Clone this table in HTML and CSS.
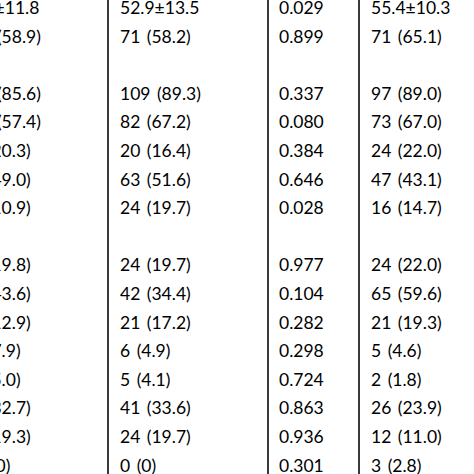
FILE: index.html
```html
<!DOCTYPE html>
<html>
<head>
<meta charset="utf-8">
<link rel="stylesheet" href="styles.css">
</head>
<body>
<div class="table">
  <div class="row"><div class="c a">54.1±11.8</div><div class="c b">52.9±13.5</div><div class="c p">0.029</div><div class="c d">55.4±10.3</div></div>
  <div class="row"><div class="c a">119 (58.9)</div><div class="c b">71 (58.2)</div><div class="c p">0.899</div><div class="c d">71 (65.1)</div></div>
  <div class="row"><div class="c a"></div><div class="c b"></div><div class="c p"></div><div class="c d"></div></div>
  <div class="row"><div class="c a">173 (85.6)</div><div class="c b">109 (89.3)</div><div class="c p">0.337</div><div class="c d">97 (89.0)</div></div>
  <div class="row"><div class="c a">116 (57.4)</div><div class="c b">82 (67.2)</div><div class="c p">0.080</div><div class="c d">73 (67.0)</div></div>
  <div class="row"><div class="c a">41 (20.3)</div><div class="c b">20 (16.4)</div><div class="c p">0.384</div><div class="c d">24 (22.0)</div></div>
  <div class="row"><div class="c a">99 (49.0)</div><div class="c b">63 (51.6)</div><div class="c p">0.646</div><div class="c d">47 (43.1)</div></div>
  <div class="row"><div class="c a">22 (10.9)</div><div class="c b">24 (19.7)</div><div class="c p">0.028</div><div class="c d">16 (14.7)</div></div>
  <div class="row"><div class="c a"></div><div class="c b"></div><div class="c p"></div><div class="c d"></div></div>
  <div class="row"><div class="c a">40 (19.8)</div><div class="c b">24 (19.7)</div><div class="c p">0.977</div><div class="c d">24 (22.0)</div></div>
  <div class="row"><div class="c a">88 (43.6)</div><div class="c b">42 (34.4)</div><div class="c p">0.104</div><div class="c d">65 (59.6)</div></div>
  <div class="row"><div class="c a">26 (12.9)</div><div class="c b">21 (17.2)</div><div class="c p">0.282</div><div class="c d">21 (19.3)</div></div>
  <div class="row"><div class="c a">16 (7.9)</div><div class="c b">6 (4.9)</div><div class="c p">0.298</div><div class="c d">5 (4.6)</div></div>
  <div class="row"><div class="c a">10 (5.0)</div><div class="c b">5 (4.1)</div><div class="c p">0.724</div><div class="c d">2 (1.8)</div></div>
  <div class="row"><div class="c a">66 (32.7)</div><div class="c b">41 (33.6)</div><div class="c p">0.863</div><div class="c d">26 (23.9)</div></div>
  <div class="row"><div class="c a">39 (19.3)</div><div class="c b">24 (19.7)</div><div class="c p">0.936</div><div class="c d">12 (11.0)</div></div>
  <div class="row"><div class="c a">2 (1.0)</div><div class="c b">0 (0)</div><div class="c p">0.301</div><div class="c d">3 (2.8)</div></div>
</div>
</body>
</html>
```
FILE: styles.css
```css
html, body {
  margin: 0;
  padding: 0;
  background: #fff;
  overflow: hidden;
  width: 474px;
  height: 474px;
}
.table {
  margin-top: -6px;
  margin-left: -53px;
  font-family: Lato, "Noto Sans", sans-serif;
  font-size: 17.5px;
  word-spacing: 2px;
  color: #000;
}
.row {
  display: grid;
  grid-template-columns: 160px 160px 91px 200px;
  height: 28.6px;
}
.c {
  line-height: 28.6px;
  white-space: nowrap;
  padding-left: 13px;
}
.b, .p, .d {
  border-left: 2px solid #3a3a3a;
}
.b { padding-left: 11px; }
.p { padding-left: 10px; }
.d { padding-left: 11px; }
```
